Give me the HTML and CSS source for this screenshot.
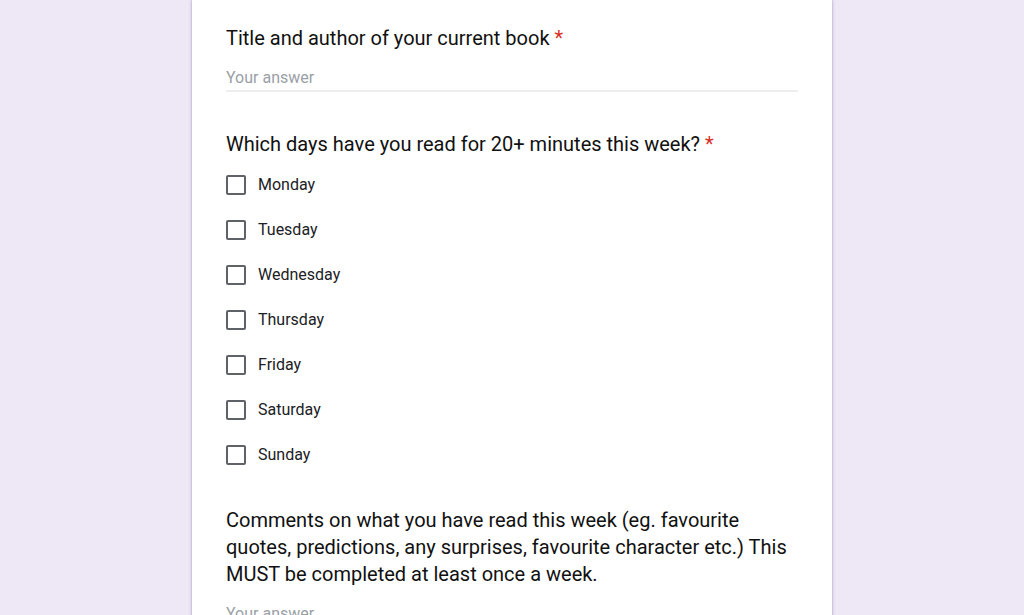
FILE: index.html
```html
<!DOCTYPE html>
<html>
<head>
<meta charset="utf-8">
<link rel="stylesheet" href="styles.css">
</head>
<body>
<div class="page">
  <div class="card">
    <div class="question">
      <div class="q-title">Title and author of your current book <span class="req">*</span></div>
      <div class="answer">Your answer</div>
    </div>
    <div class="question">
      <div class="q-title">Which days have you read for 20+ minutes this week? <span class="req">*</span></div>
      <div class="options">
        <div class="option"><span class="box"></span><span class="label">Monday</span></div>
        <div class="option"><span class="box"></span><span class="label">Tuesday</span></div>
        <div class="option"><span class="box"></span><span class="label">Wednesday</span></div>
        <div class="option"><span class="box"></span><span class="label">Thursday</span></div>
        <div class="option"><span class="box"></span><span class="label">Friday</span></div>
        <div class="option"><span class="box"></span><span class="label">Saturday</span></div>
        <div class="option"><span class="box"></span><span class="label">Sunday</span></div>
      </div>
    </div>
    <div class="question q3">
      <div class="q-title">Comments on what you have read this week (eg. favourite quotes, predictions, any surprises, favourite character etc.) This MUST be completed at least once a week.</div>
      <div class="answer">Your answer</div>
    </div>
  </div>
</div>
</body>
</html>
```

FILE: styles.css
```css
html, body {
  margin: 0;
  padding: 0;
  height: 100%;
  overflow: hidden;
  background: #ede7f6;
  font-family: Roboto, "Liberation Sans", Arial, sans-serif;
  color: #202124;
}
.page {
  display: flex;
  justify-content: center;
}
.card {
  width: 640px;
  box-sizing: border-box;
  background: #fff;
  padding: 25px 34px 0;
  min-height: 700px;
  box-shadow: 0 0 2px rgba(60, 40, 100, 0.35), 0 0 4px rgba(60, 40, 100, 0.15);
}
.q-title {
  font-size: 20px;
  line-height: 27px;
  color: #111;
}
.req {
  color: #d93025;
}
.answer {
  margin-top: 13px;
  height: 25px;
  line-height: 25px;
  font-size: 16px;
  color: #9aa0a6;
  border-bottom: 2px solid #eeeeee;
}
.question + .question {
  margin-top: 39px;
}
.question.q3 {
  margin-top: 30px;
}
.options {
  margin-top: 4px;
  display: flex;
  flex-direction: column;
}
.option {
  height: 45px;
  display: flex;
  align-items: center;
}
.box {
  width: 16px;
  height: 16px;
  border: 2px solid #5f6368;
  border-radius: 2px;
  flex: none;
}
.label {
  margin-left: 12px;
  font-size: 16px;
  color: #202124;
}
```
